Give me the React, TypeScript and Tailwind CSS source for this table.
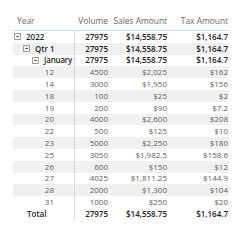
import React from "react";

type Row = {
    label: string;
    level: number;
    volume: string;
    sales: string;
    tax: string;
    bold?: boolean;
    toggle?: boolean;
    shaded?: boolean;
};

const rows: Row[] = [
    { label: "2022", level: 0, volume: "27975", sales: "$14,558.75", tax: "$1,164.7", bold: true, toggle: true },
    { label: "Qtr 1", level: 1, volume: "27975", sales: "$14,558.75", tax: "$1,164.7", bold: true, toggle: true, shaded: true },
    { label: "January", level: 2, volume: "27975", sales: "$14,558.75", tax: "$1,164.7", bold: true, toggle: true },
    { label: "12", level: 3, volume: "4500", sales: "$2,025", tax: "$162", shaded: true },
    { label: "14", level: 3, volume: "3000", sales: "$1,950", tax: "$156" },
    { label: "18", level: 3, volume: "100", sales: "$25", tax: "$2", shaded: true },
    { label: "19", level: 3, volume: "200", sales: "$90", tax: "$7.2" },
    { label: "20", level: 3, volume: "4000", sales: "$2,600", tax: "$208", shaded: true },
    { label: "22", level: 3, volume: "500", sales: "$125", tax: "$10" },
    { label: "23", level: 3, volume: "5000", sales: "$2,250", tax: "$180", shaded: true },
    { label: "25", level: 3, volume: "3050", sales: "$1,982.5", tax: "$158.6" },
    { label: "26", level: 3, volume: "600", sales: "$150", tax: "$12", shaded: true },
    { label: "27", level: 3, volume: "4025", sales: "$1,811.25", tax: "$144.9" },
    { label: "28", level: 3, volume: "2000", sales: "$1,300", tax: "$104", shaded: true },
    { label: "31", level: 3, volume: "1000", sales: "$250", tax: "$20" },
];

// leaf rows (days) sit right-aligned under the month label
const indent = ["pl-[1px]", "pl-[10px]", "pl-[19px]", "justify-end pr-[20px]"];

// the little boxed minus used by the matrix rows
const Toggle = () => (
    <span className="inline-flex items-center justify-center w-[7px] h-[7px] border border-[#a19f9d] mr-[5px] shrink-0">
        <span className="block w-[3px] h-px bg-[#605e5c]" />
    </span>
);

const Cell = ({ children, bold }: { children: React.ReactNode; bold?: boolean }) => (
    <div className={`text-right pr-[1px] whitespace-nowrap ${bold ? "font-semibold text-[#252423]" : "text-[#605e5c]"}`}>
        {children}
    </div>
);

const App = () => {
    return (
        <div className="w-[250px] h-[241px] bg-white pt-[13px] pl-[13px] font-['Open_Sans',sans-serif] text-[8px] leading-none">
            <div className="w-[216px]">
                <div className="grid grid-cols-[62px_34px_59px_61px] h-[18px] items-center border-b border-[#c6dcf5] text-[#666666] text-[8.4px] whitespace-nowrap">
                    <div className="pl-[4px]">Year</div>
                    <div className="text-right pr-[1px]">Volume</div>
                    <div className="text-right pr-[1px]">Sales Amount</div>
                    <div className="text-right pr-[1px]">Tax Amount</div>
                </div>
                {rows.map((r) => (
                    <div
                        key={r.label}
                        className={`grid grid-cols-[62px_34px_59px_61px] h-[11.8px] items-center ${r.shaded ? "bg-[#f0f0f0]" : ""}`}
                    >
                        <div
                            className={`flex items-center h-full border-r border-[#c6dcf5] whitespace-nowrap ${indent[r.level]} ${
                                r.bold ? "font-semibold text-[#252423]" : "text-[#605e5c]"
                            }`}
                        >
                            {r.toggle && <Toggle />}
                            <span className={r.level === 2 ? "tracking-[-0.2px]" : ""}>{r.label}</span>
                        </div>
                        <Cell bold={r.bold}>{r.volume}</Cell>
                        <Cell bold={r.bold}>{r.sales}</Cell>
                        <Cell bold={r.bold}>{r.tax}</Cell>
                    </div>
                ))}
                <div className="grid grid-cols-[62px_34px_59px_61px] h-[11.8px] items-center">
                    <div className="flex items-center h-full border-r border-[#c6dcf5] pl-[14px] font-semibold text-[#252423]">
                        Total
                    </div>
                    <Cell bold>27975</Cell>
                    <Cell bold>$14,558.75</Cell>
                    <Cell bold>$1,164.7</Cell>
                </div>
            </div>
        </div>
    );
};

export default App;
